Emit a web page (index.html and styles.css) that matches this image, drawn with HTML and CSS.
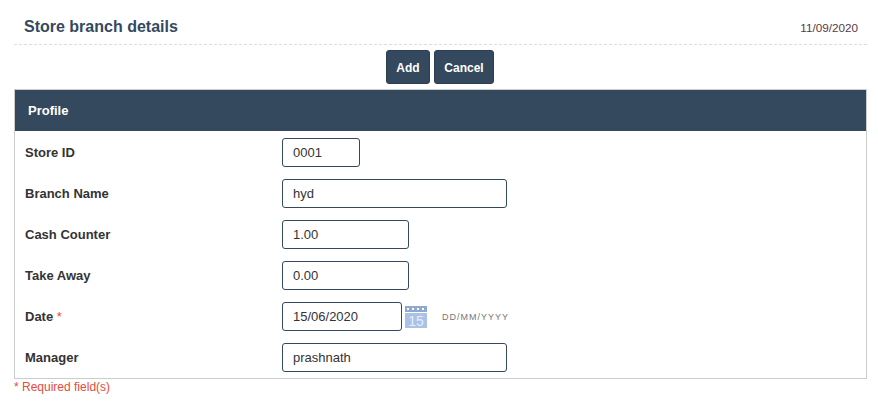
FILE: index.html
```html
<!DOCTYPE html>
<html>
    <head>
        <title>Store branch details</title>
        <link rel="stylesheet" href="styles.css">
    </head>
    <body>
        <div class="container">
            <div class="pageHeader">
                <span class="pageTitle">Store branch details</span>
                <span class="pageDate">11/09/2020</span>
            </div>
            <div class="actions">
                <button class="btn btnAdd">Add</button>
                <button class="btn btnCancel">Cancel</button>
            </div>
            <div class="panel">
                <div class="panelHeader">Profile</div>
                <div class="panelBody">
                    <div class="row">
                        <label class="rowLabel">Store ID</label>
                        <input class="field fieldSmall" type="text" value="0001">
                    </div>
                    <div class="row">
                        <label class="rowLabel">Branch Name</label>
                        <input class="field fieldLarge" type="text" value="hyd">
                    </div>
                    <div class="row">
                        <label class="rowLabel">Cash Counter</label>
                        <input class="field fieldMedium" type="text" value="1.00">
                    </div>
                    <div class="row">
                        <label class="rowLabel">Take Away</label>
                        <input class="field fieldMedium" type="text" value="0.00">
                    </div>
                    <div class="row">
                        <label class="rowLabel">Date <span class="star">*</span></label>
                        <input class="field fieldDate" type="text" value="15/06/2020">
                        <svg class="calendar" width="22" height="22" viewBox="0 0 22 22">
                            <rect x="0" y="0" width="22" height="6" fill="#8fa9cf"/>
                            <rect x="0" y="7" width="22" height="15" fill="#a9c2e6"/>
                            <rect x="2" y="2" width="2" height="2" fill="#fff"/>
                            <rect x="7" y="2" width="2" height="2" fill="#fff"/>
                            <rect x="12" y="2" width="2" height="2" fill="#fff"/>
                            <rect x="17" y="2" width="2" height="2" fill="#fff"/>
                            <text class="calendarDay" x="11" y="19.5" text-anchor="middle">15</text>
                        </svg>
                        <span class="dateHint">DD/MM/YYYY</span>
                    </div>
                    <div class="row">
                        <label class="rowLabel">Manager</label>
                        <input class="field fieldLarge" type="text" value="prashnath">
                    </div>
                </div>
            </div>
            <div class="required">* Required field(s)</div>
        </div>
    </body>
</html>
```

FILE: styles.css
```css
html,body {
    margin:0;
    background:#fff;
}
body {
    font-family: "Liberation Sans", Arial, sans-serif;
    color: #333;
}
.container {
    display: flex;
    flex-direction: column;
    padding: 10px 11px 0 14px;
}
.pageHeader {
    height: 34px;
    display: flex;
    justify-content: space-between;
    align-items: center;
    padding: 0 9px 0 10px;
    border-bottom: 1px dashed #ddd;
}
.pageTitle {
    font-size: 16px;
    font-weight: 700;
    color: #34495e;
}
.pageDate {
    font-size: 11.7px;
    color: #5a3a45;
}
.actions {
    display: flex;
    justify-content: center;
    gap: 4px;
    margin-top: 5px;
    margin-bottom: 5px;
    padding-right: 2px;
}
.btn {
    height: 34px;
    padding: 1px 0 0 1px;
    background: #34495e;
    border: 1px solid #2c3e50;
    border-radius: 3px;
    color: #fff;
    font-family: inherit;
    font-size: 12px;
    font-weight: 700;
}
.btnAdd {
    width: 44px;
}
.btnCancel {
    width: 60px;
}
.panel {
    border: 1px solid #ccc;
}
.panelHeader {
    height: 41px;
    line-height: 41px;
    padding-left: 13px;
    background: #34495e;
    color: #fff;
    font-size: 13px;
    font-weight: 700;
}
.panelBody {
    display: flex;
    flex-direction: column;
    gap: 12px;
    padding: 7px 0 6px;
}
.row {
    display: flex;
    align-items: center;
    height: 29px;
}
.rowLabel {
    width: 267px;
    padding-left: 10px;
    box-sizing: border-box;
    font-size: 13px;
    font-weight: 700;
    color: #333;
}
.star {
    color: #e74c3c;
    font-weight: 400;
}
.field {
    height: 29px;
    box-sizing: border-box;
    padding: 0 10px;
    border: 1px solid #34495e;
    border-radius: 3px;
    font-family: inherit;
    font-size: 13px;
    color: #333;
}
.fieldSmall {
    width: 78px;
}
.fieldMedium {
    width: 127px;
}
.fieldDate {
    width: 120px;
}
.fieldLarge {
    width: 225px;
}
.calendar {
    margin-left: 3px;
    margin-top: 1px;
}
.calendarDay {
    font-family: "Liberation Sans", sans-serif;
    font-size: 14px;
    fill: #e6eef9;
}
.dateHint {
    margin-left: 15px;
    font-size: 9px;
    letter-spacing: 1px;
    color: #777;
}
.required {
    margin-top: 1px;
    font-size: 12px;
    color: #e74c3c;
}
```
